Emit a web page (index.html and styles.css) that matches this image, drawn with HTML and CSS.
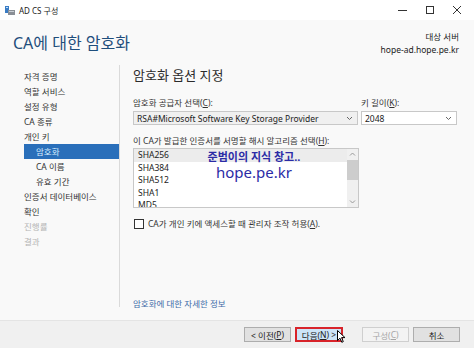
FILE: index.html
```html
<!DOCTYPE html>
<html>
<head>
<meta charset="utf-8" />
<title>AD CS 구성</title>
<link rel="stylesheet" href="styles.css">
</head>
<body>

<div class="titlebar">
  <svg class="app-icon" width="10" height="9" viewBox="0 0 10 9">
    <rect x="0" y="0" width="4" height="7" fill="#3a7cc4"/>
    <rect x="1" y="1" width="2" height="1" fill="#bfe0ff"/>
    <rect x="3" y="4" width="7" height="5" fill="#8a8f96"/>
    <rect x="4" y="5" width="5" height="1" fill="#c9ced4"/>
  </svg>
  <span class="app-name">AD CS 구성</span>
  <div class="win-buttons">
    <svg width="10" height="10" viewBox="0 0 10 10"><line x1="0" y1="5.5" x2="9" y2="5.5" stroke="#333" stroke-width="1"/></svg>
    <svg width="10" height="10" viewBox="0 0 10 10"><rect x="1.5" y="1.5" width="7" height="7" fill="none" stroke="#333" stroke-width="1"/></svg>
    <svg width="10" height="10" viewBox="0 0 10 10"><path d="M1 1 L9 9 M9 1 L1 9" stroke="#333" stroke-width="1"/></svg>
  </div>
</div>

<div class="header">
  <div class="page-title">CA에 대한 암호화</div>
  <div class="server">
    <div>대상 서버</div>
    <div>hope-ad.hope.pe.kr</div>
  </div>
</div>

<div class="main">
  <div class="nav">
    <div class="nav-item">자격 증명</div>
    <div class="nav-item">역할 서비스</div>
    <div class="nav-item">설정 유형</div>
    <div class="nav-item">CA 종류</div>
    <div class="nav-item">개인 키</div>
    <div class="nav-item sub selected">암호화</div>
    <div class="nav-item sub">CA 이름</div>
    <div class="nav-item sub">유효 기간</div>
    <div class="nav-item">인증서 데이터베이스</div>
    <div class="nav-item">확인</div>
    <div class="nav-item disabled">진행률</div>
    <div class="nav-item disabled">결과</div>
  </div>

  <div class="content">
    <div class="section-title">암호화 옵션 지정</div>

    <div class="select-row">
      <div class="field provider">
        <div class="label">암호화 공급자 선택(<u>C</u>):</div>
        <div class="combo">
          <span>RSA#Microsoft Software Key Storage Provider</span>
          <svg width="7" height="5" viewBox="0 0 7 5"><path d="M1 1 L3.5 3.5 L6 1" fill="none" stroke="#666" stroke-width="1"/></svg>
        </div>
      </div>
      <div class="field keylen">
        <div class="label">키 길이(<u>K</u>):</div>
        <div class="combo white">
          <span>2048</span>
          <svg width="7" height="5" viewBox="0 0 7 5"><path d="M1 1 L3.5 3.5 L6 1" fill="none" stroke="#666" stroke-width="1"/></svg>
        </div>
      </div>
    </div>

    <div class="label hash-label">이 CA가 발급한 인증서를 서명할 해시 알고리즘 선택(<u>H</u>):</div>
    <div class="listbox">
      <div class="list-items">
        <div class="list-item current">SHA256</div>
        <div class="list-item">SHA384</div>
        <div class="list-item">SHA512</div>
        <div class="list-item">SHA1</div>
        <div class="list-item">MD5</div>
      </div>
      <div class="scrollbar">
        <svg width="11" height="11" viewBox="0 0 11 11"><path d="M3 6.5 L5.5 4 L8 6.5" fill="none" stroke="#9a9a9a" stroke-width="1"/></svg>
        <div class="thumb"></div>
        <div class="track"></div>
        <svg width="11" height="11" viewBox="0 0 11 11"><path d="M3 4.5 L5.5 7 L8 4.5" fill="none" stroke="#9a9a9a" stroke-width="1"/></svg>
      </div>
      <div class="watermark">
        <div class="wm-line1">준범이의 지식 창고..</div>
        <div class="wm-line2">hope.pe.kr</div>
      </div>
    </div>

    <div class="check-row">
      <span class="checkbox"></span>
      <span>CA가 개인 키에 액세스할 때 관리자 조작 허용(<u>A</u>).</span>
    </div>

    <div class="more-link">암호화에 대한 자세한 정보</div>
  </div>
</div>

<div class="footer">
  <div class="btn">&lt; 이전(<u>P</u>)</div>
  <div class="btn next">다음(<u>N</u>) &gt;</div>
  <div class="btn disabled gap">구성(<u>C</u>)</div>
  <div class="btn">취소</div>
  <svg class="cursor" width="9" height="13" viewBox="0 0 9 13">
    <path d="M0.5 0.5 L0.5 10.5 L3 8.2 L4.8 12.3 L6.3 11.6 L4.6 7.6 L8 7.6 Z" fill="#fff" stroke="#000" stroke-width="1"/>
  </svg>
</div>

</body>
</html>
```

FILE: styles.css
```css
body
{
	margin: 0;
	width: 474px;
	height: 348px;
	overflow: hidden;
	background-color: #f9f9f9;
	font-family: "Noto Sans", "Noto Sans CJK KR", sans-serif;
	font-size: 8.5px;
	color: #333;
}

u
{
	text-decoration: underline;
}

.titlebar
{
	height: 20px;
	background-color: #fff;
	display: flex;
	align-items: center;
	padding-left: 5px;
}

.app-icon
{
	margin-right: 4px;
}

.app-name
{
	font-size: 8px;
	color: #222;
}

.win-buttons
{
	margin-left: auto;
	display: flex;
	gap: 17px;
	padding-right: 12px;
}

.header
{
	height: 45px;
	display: flex;
	justify-content: space-between;
	align-items: center;
	padding: 0 15px 0 13px;
}

.page-title
{
	font-size: 16px;
	color: #1f4e7c;
	margin-top: -2px;
}

.server
{
	text-align: right;
	line-height: 13px;
	color: #222;
}

.main
{
	display: flex;
	height: 255px;
}

.nav
{
	width: 120px;
	box-sizing: border-box;
	border-right: 1px solid #dadada;
	padding-top: 4px;
	margin-bottom: 13px;
}

.nav-item
{
	line-height: 15px;
	padding-left: 24px;
	white-space: nowrap;
}

.nav-item.sub
{
	padding-left: 36px;
}

.nav-item.selected
{
	margin-left: 24px;
	padding-left: 12px;
	background-color: #2a6fba;
	color: #d8eeff;
}

.nav-item.disabled
{
	color: #b4b4b4;
}

.content
{
	flex: 1;
	padding-left: 13px;
	padding-top: 2px;
	display: flex;
	flex-direction: column;
}

.section-title
{
	font-size: 13px;
	line-height: 16px;
	color: #2b2b2b;
}

.select-row
{
	display: flex;
	gap: 3px;
	margin-top: 14px;
}

.label
{
	line-height: 12px;
	white-space: nowrap;
}

.combo
{
	margin-top: 2px;
	height: 14px;
	box-sizing: border-box;
	border: 1px solid #c8c8c8;
	background-color: #f0f0f0;
	display: flex;
	align-items: center;
	justify-content: space-between;
	padding: 0 4px 0 3px;
	color: #222;
}

.combo.white
{
	background-color: #fff;
}

.provider
{
	width: 225px;
}

.keylen
{
	width: 96px;
}

.hash-label
{
	margin-top: 10px;
}

.listbox
{
	position: relative;
	margin-top: 1px;
	width: 226px;
	height: 60px;
	box-sizing: border-box;
	border: 1px solid #c8c8c8;
	background-color: #fff;
	display: flex;
	overflow: hidden;
}

.list-items
{
	flex: 1;
}

.list-item
{
	height: 12.5px;
	line-height: 12.5px;
	padding-left: 4px;
	color: #222;
}

.list-item.current
{
	background-color: #ececec;
}

.scrollbar
{
	width: 11px;
	background-color: #f0f0f0;
	display: flex;
	flex-direction: column;
}

.thumb
{
	height: 20px;
	background-color: #cdcdcd;
}

.track
{
	flex: 1;
}

.watermark
{
	position: absolute;
	left: 68px;
	top: 0px;
	color: #2b2ba6;
	text-align: center;
	width: 104px;
}

.wm-line1
{
	font-size: 11px;
	font-weight: bold;
	line-height: 15px;
}

.wm-line2
{
	font-size: 15px;
	line-height: 16px;
}

.check-row
{
	margin-top: 10px;
	display: flex;
	align-items: center;
	gap: 4px;
	line-height: 12px;
	padding-left: 1px;
}

.checkbox
{
	width: 8px;
	height: 8px;
	border: 1px solid #333;
	background-color: #fff;
}

.more-link
{
	margin-top: auto;
	margin-bottom: 10px;
	color: #3d6ca8;
	line-height: 12px;
}

.footer
{
	position: relative;
	height: 28px;
	box-sizing: border-box;
	background-color: #f0f0f0;
	border-top: 1px solid #e4e4e4;
	display: flex;
	justify-content: flex-end;
	align-items: flex-start;
	padding: 6px 14px 0 0;
	gap: 4px;
}

.btn
{
	width: 47px;
	height: 15px;
	box-sizing: border-box;
	border: 1px solid #adadad;
	background-color: #e1e1e1;
	display: flex;
	align-items: center;
	justify-content: center;
	color: #222;
}

.btn.next
{
	width: 48px;
	border: 2px solid #d8232a;
	background-color: #cce4f7;
}

.btn.disabled
{
	color: #a6a6a6;
	border-color: #cfcfcf;
	background-color: #f3f3f3;
}

.btn.gap
{
	margin-left: 15px;
}

.cursor
{
	position: absolute;
	left: 337px;
	top: 9px;
}
```
